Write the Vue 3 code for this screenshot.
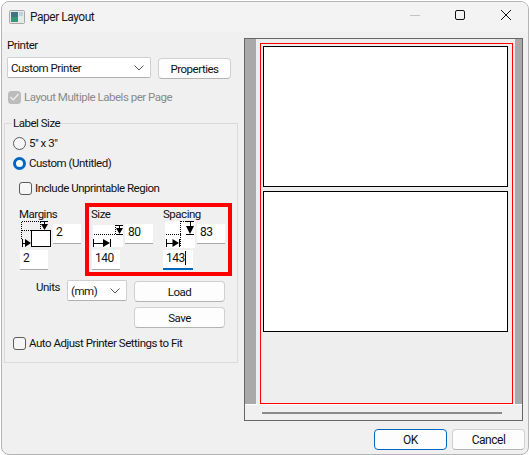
<script setup>
const labelCount = 2
</script>

<template>
  <div class="dialog">
    <header class="titlebar">
      <svg class="appicon" width="16" height="14" viewBox="0 0 16 14">
        <rect x="0.5" y="0.5" width="15" height="13" rx="1" fill="#e8eaea" stroke="#a8a8a8" />
        <rect x="2" y="2" width="7" height="10" fill="#3f7480" />
        <rect x="2" y="7" width="7" height="5" fill="#2f9a78" />
        <rect x="10" y="2" width="4" height="4" fill="#bcd4dc" />
      </svg>
      <span class="title">Paper Layout</span>
      <div class="controls">
        <svg width="10" height="10" viewBox="0 0 10 10"><path d="M0 5.5H10" stroke="#c4c4c4" stroke-width="1" /></svg>
        <svg width="10" height="10" viewBox="0 0 10 10"><rect x="0.5" y="0.5" width="9" height="9" rx="1.5" fill="none" stroke="#111" /></svg>
        <svg class="close" width="10" height="10" viewBox="0 0 10 10"><path d="M0 0L10 10M10 0L0 10" stroke="#111" stroke-width="1" /></svg>
      </div>
    </header>

    <main class="main">
      <section class="left">
        <div class="text printer">Printer</div>
        <div class="printer-row">
          <div class="select wide">
            <span>Custom Printer</span>
            <svg width="10" height="6" viewBox="0 0 10 6"><path d="M0.5 0.5L5 5L9.5 0.5" fill="none" stroke="#555" /></svg>
          </div>
          <button class="btn props">Properties</button>
        </div>
        <div class="check-row multi">
          <span class="box disabled">
            <svg width="9" height="8" viewBox="0 0 9 8"><path d="M0.5 4L3.2 6.8L8.5 1" fill="none" stroke="#f2f2f2" stroke-width="1.2" /></svg>
          </span>
          <span class="muted">Layout Multiple Labels per Page</span>
        </div>

        <div class="group">
          <span class="legend">Label Size</span>
          <div class="check-row first"><span class="radio"></span><span>5" x 3"</span></div>
          <div class="check-row second"><span class="radio on"></span><span>Custom (Untitled)</span></div>
          <div class="check-row third"><span class="box"></span><span>Include Unprintable Region</span></div>

          <div class="fields">
            <div class="block">
              <div class="text">Margins</div>
              <div class="field-row">
                <svg class="diagram" width="34" height="27" viewBox="0 0 34 27" shape-rendering="crispEdges">
                  <path d="M2.5 0.5H21.5M2.5 0.5V18M21.5 0.5V9M2.5 9.5H12" fill="none" stroke="#000" stroke-dasharray="1 1" />
                  <rect x="12.5" y="9.5" width="19" height="16" fill="#fff" stroke="#000" />
                  <path d="M22 0.5H29M25.5 1V4" stroke="#000" />
                  <path d="M22 3H29L25.5 9Z" fill="#000" shape-rendering="auto" />
                  <path d="M3.5 18V26M4 22H8" stroke="#000" />
                  <path d="M6 18V26L12 22Z" fill="#000" shape-rendering="auto" />
                </svg>
                <span class="input">2</span>
              </div>
              <div class="second-line one"><span class="input">2</span></div>
            </div>

            <div class="block">
              <div class="text">Size</div>
              <div class="field-row">
                <svg class="diagram" width="34" height="27" viewBox="0 0 34 27" shape-rendering="crispEdges">
                  <rect x="2" y="4" width="30" height="22" fill="#fff" />
                  <path d="M2.5 13.5H24.5M24.5 4V13M24.5 4.5H27" fill="none" stroke="#000" stroke-dasharray="1 1" />
                  <path d="M25 4.5H32M25 13.5H32M28.5 5V9" stroke="#000" />
                  <path d="M25 7H32L28.5 13Z" fill="#000" shape-rendering="auto" />
                  <path d="M2.5 18V26M19.5 18V26M3 22H14" stroke="#000" />
                  <path d="M12 18V26L19 22Z" fill="#000" shape-rendering="auto" />
                </svg>
                <span class="input">80</span>
              </div>
              <div class="second-line one"><span class="input">140</span></div>
            </div>

            <div class="block">
              <div class="text">Spacing</div>
              <div class="field-row">
                <svg class="diagram" width="34" height="27" viewBox="0 0 34 27" shape-rendering="crispEdges">
                  <rect x="2" y="0" width="30" height="27" fill="#fff" />
                  <path d="M2.5 13.5H17.5M17.5 0V26M17.5 0.5H24" fill="none" stroke="#000" stroke-dasharray="1 1" />
                  <path d="M23 0.5H31M23 13.5H31M27 1V7" stroke="#000" />
                  <path d="M23 5H31L27 13Z" fill="#000" shape-rendering="auto" />
                  <path d="M3.5 18V26M16.5 18V26M4 22H11" stroke="#000" />
                  <path d="M9.5 18V26L16 22Z" fill="#000" shape-rendering="auto" />
                </svg>
                <span class="input">83</span>
              </div>
              <div class="second-line"><span class="input focus">143<i class="caret"></i></span></div>
            </div>
          </div>

          <div class="units-row">
            <span class="units-label">Units</span>
            <div class="select units">
              <span>(mm)</span>
              <svg width="10" height="6" viewBox="0 0 10 6"><path d="M0.5 0.5L5 5L9.5 0.5" fill="none" stroke="#555" /></svg>
            </div>
            <div class="actions">
              <button class="btn">Load</button>
              <button class="btn">Save</button>
            </div>
          </div>

          <div class="check-row auto"><span class="box"></span><span>Auto Adjust Printer Settings to Fit</span></div>

          <div class="highlight"></div>
        </div>
      </section>

      <section class="preview">
        <div class="sheet-area">
          <div class="sheet">
            <div class="printable">
              <div v-for="n in labelCount" :key="n" class="label"></div>
            </div>
          </div>
        </div>
        <div class="scroll-strip"><div class="scroll-thumb"></div></div>
      </section>
    </main>

    <footer class="footer">
      <button class="btn big primary">OK</button>
      <button class="btn big">Cancel</button>
    </footer>
  </div>
</template>

<style>
html, body { margin: 0; background: #fff; }
</style>

<style scoped>
.dialog {
  box-sizing: border-box;
  width: 528px;
  height: 454px;
  margin: 1px 0 0 1px;
  border: 1px solid #b4b4b4;
  border-radius: 8px;
  background: #f0f0f0;
  overflow: hidden;
  font-family: Roboto, "Noto Sans", sans-serif;
  font-size: 11.5px;
  letter-spacing: -0.48px;
  line-height: 14px;
  color: #111;
}
.titlebar {
  height: 30px;
  display: flex;
  align-items: center;
  background: #f3f3f3;
  padding-left: 7px;
}
.appicon { margin-top: -1px; }
.title { margin-left: 5px; font-size: 12px; color: #1a1a1a; margin-top: -1px; }
.controls {
  margin-left: auto;
  display: flex;
  align-items: center;
  gap: 35px;
  padding-right: 17px;
  margin-top: -4px;
}
.close { margin-left: 1px; }
.main { display: flex; height: 397px; }
.left { width: 242px; box-sizing: border-box; padding: 6px 0 0 5px; flex: none; }
.printer-row { display: flex; margin-top: 5px; align-items: flex-start; gap: 7px; }
.select {
  box-sizing: border-box;
  height: 21px;
  background: #fff;
  border: 1px solid #cfcfcf;
  border-bottom-color: #b0b0b0;
  border-radius: 2px;
  display: flex;
  align-items: center;
  justify-content: space-between;
  padding: 0 6px 0 3px;
}
.wide { width: 144px; }
.units { width: 60px; flex: none; }
.btn {
  box-sizing: border-box;
  font: inherit;
  letter-spacing: inherit;
  color: #111;
  background: #fdfdfd;
  border: 1px solid #d0d0d0;
  border-bottom-color: #b4b4b4;
  border-radius: 4px;
  padding: 0;
  height: 21px;
  display: block;
}
.actions .btn { width: 91px; }
.props { width: 73px; margin-top: 1px; }
.check-row { display: flex; align-items: center; gap: 3px; height: 14px; }
.multi { margin-top: 11px; margin-left: 1px; }
.muted { color: #8a8a8a; }
.box {
  box-sizing: border-box;
  width: 13px;
  height: 13px;
  border: 1px solid #5c5c5c;
  border-radius: 3px;
  background: #f6f6f6;
  display: flex;
  align-items: center;
  justify-content: center;
  flex: none;
}
.box.disabled { background: #bcbcbc; border-color: #bcbcbc; }
.radio {
  box-sizing: border-box;
  width: 13px;
  height: 13px;
  border: 1px solid #5c5c5c;
  border-radius: 50%;
  background: #f6f6f6;
  flex: none;
}
.radio.on { border: 3.5px solid #0067c0; background: #fff; }
.group {
  position: relative;
  box-sizing: border-box;
  width: 234px;
  height: 240px;
  margin: 19px 0 0 -3px;
  border: 1px solid #dadada;
  padding: 12px 0 0 8px;
}
.legend {
  position: absolute;
  left: 7px;
  top: -8px;
  padding: 0 1px;
  background: #f0f0f0;
}
.second { margin-top: 6px; }
.third { margin-top: 11px; margin-left: 6px; }
.fields { display: flex; margin: 12px 0 0 6px; }
.block { width: 72px; flex: none; }
.field-row { display: flex; align-items: flex-start; }
.diagram { flex: none; display: block; }
.input {
  box-sizing: border-box;
  display: block;
  width: 28px;
  height: 20px;
  margin-top: 3px;
  padding: 1px 0 0 3px;
  background: #fff;
  border-bottom: 1px solid #a8a8a8;
  color: #111;
  font-size: 12px;
}
.second-line { margin-top: 2px; }
.second-line .input { margin-top: 0; }
.second-line.one { margin-left: 1px; }
.input.focus { width: 30px; border-bottom: 2px solid #0067c0; position: relative; }
.caret { display: inline-block; width: 1px; height: 14px; background: #000; vertical-align: top; margin-left: 0; }
.units-row { display: flex; align-items: flex-start; margin: 10px 0 0 23px; }
.units-label { width: 31px; flex: none; margin-top: 0; }
.actions { width: 91px; margin-left: 7px; padding-top: 1px; display: flex; flex-direction: column; gap: 5px; }
.auto { margin-top: 8px; }
.highlight {
  position: absolute;
  left: 80px;
  top: 79px;
  width: 147px;
  height: 73px;
  box-sizing: border-box;
  border: 4px solid #ff0000;
}
.preview {
  box-sizing: border-box;
  width: 279px;
  height: 383px;
  margin-top: 6px;
  border: 1px solid #666;
  background: #f0f0f0;
  flex: none;
}
.sheet-area { height: 365px; background: #a9a9a9; padding: 0 7px 0 11px; border-bottom: 1px solid #fff; }
.sheet { height: 365px; background: #eeeeee; padding: 4px 2px 0 4px; box-sizing: border-box; }
.printable {
  box-sizing: border-box;
  width: 253px;
  height: 361px;
  border: 1px solid #ff0000;
  padding: 2px 4px 0 2px;
  display: flex;
  flex-direction: column;
  gap: 4px;
}
.label { box-sizing: border-box; height: 141px; width: 245px; background: #fff; border: 1px solid #000; }
.scroll-strip { padding: 7px 0 0 17px; }
.scroll-thumb { width: 240px; height: 2px; background: #8a8a8a; }
.footer { display: flex; justify-content: flex-end; gap: 5px; padding-right: 3px; }
.big { width: 73px; height: 21px; font-size: 12px; }
.primary { border: 1px solid #0067c0; }
</style>
